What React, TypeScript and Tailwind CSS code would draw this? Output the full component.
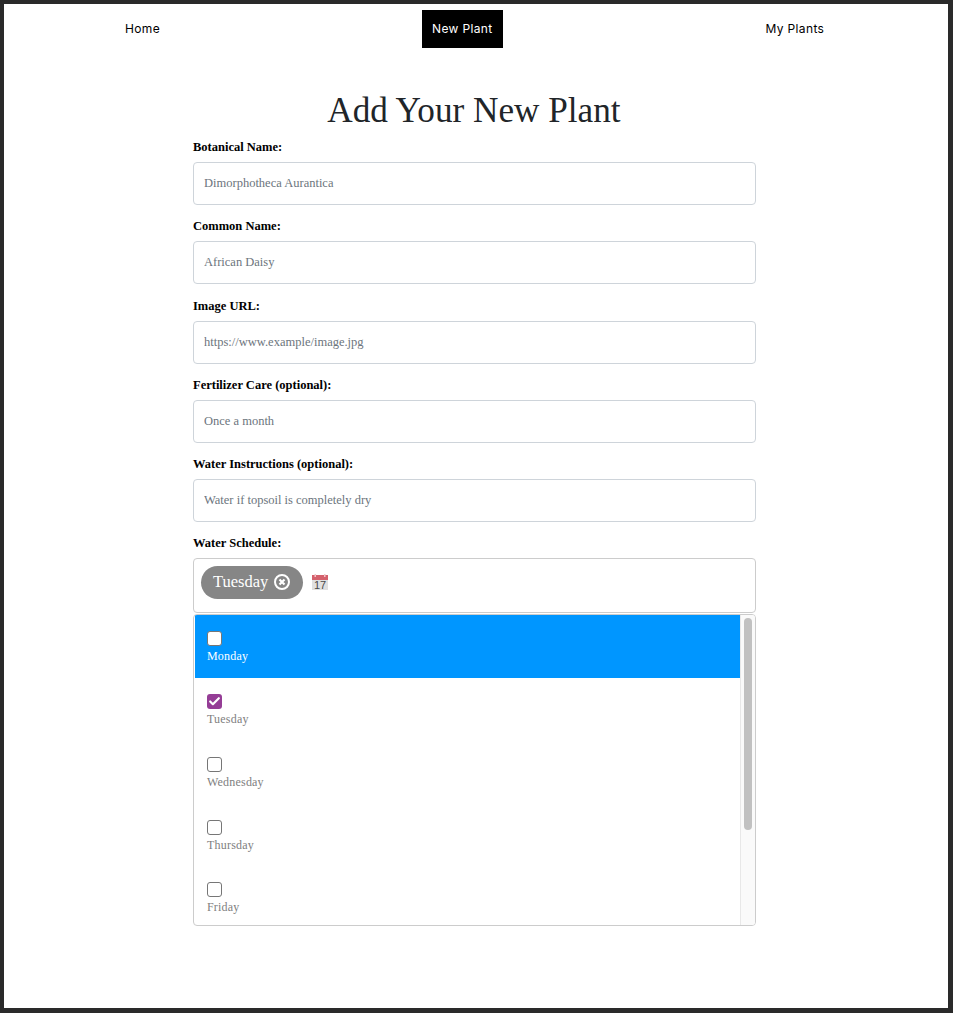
import { Check } from "lucide-react"

const serif = "font-['Liberation_Serif',serif]"

const fields = [
  { label: "Botanical Name:", placeholder: "Dimorphotheca Aurantica" },
  { label: "Common Name:", placeholder: "African Daisy" },
  { label: "Image URL:", placeholder: "https://www.example/image.jpg" },
  { label: "Fertilizer Care (optional):", placeholder: "Once a month" },
  { label: "Water Instructions (optional):", placeholder: "Water if topsoil is completely dry" },
]

const days = ["Monday", "Tuesday", "Wednesday", "Thursday", "Friday"]

function CalendarIcon() {
  return (
    <svg width="16" height="16" viewBox="0 0 16 16" className="ml-[9px] mt-[8px] shrink-0">
      <rect x="0" y="6" width="16" height="10" fill="#e0e0e0" />
      <rect x="0" y="1" width="16" height="5" fill="#d4606c" />
      <rect x="2.5" y="0" width="1.5" height="3" fill="#f0c4c8" />
      <rect x="12" y="0" width="1.5" height="3" fill="#f0c4c8" />
      <text x="8" y="15" textAnchor="middle" fontSize="11" fill="#4a4a4a" fontFamily="Liberation Sans, sans-serif">
        17
      </text>
    </svg>
  )
}

function CloseIcon() {
  return (
    <svg width="16" height="16" viewBox="0 0 16 16" className="ml-1.5 shrink-0" fill="none" stroke="white">
      <circle cx="8" cy="8" r="7" strokeWidth="2" />
      <path d="M5.5 5.5l5 5M10.5 5.5l-5 5" strokeWidth="2.2" />
    </svg>
  )
}

function DayRow({ day }: { day: string }) {
  const active = day === "Monday"
  const checked = day === "Tuesday"
  return (
    <div className={`h-[62.75px] shrink-0 pl-3 pt-[16px] text-xs leading-[14px] ${active ? "bg-[#0096ff] text-white" : "text-[#808080]"}`}>
      {checked ? (
        <span className="flex h-[15px] w-[15px] items-center justify-center rounded-[3px] bg-[#953d96]">
          <Check size={13} strokeWidth={4} color="white" />
        </span>
      ) : (
        <span className="block h-[15px] w-[15px] rounded-[3px] border-[1.5px] border-[#767676] bg-white" />
      )}
      <div className="mt-[3px] tracking-[0.2px]">{day}</div>
    </div>
  )
}

export default function App() {
  return (
    <div className={`flex h-[1013px] flex-col border-t-4 border-r-[5px] border-b-[5px] border-l-4 border-[#2a2a2a] bg-white ${serif}`}>
      <nav className="flex h-[44px] items-start pt-1.5 pl-[121px] font-['Inter',sans-serif] text-xs tracking-[0.35px]">
        <a className="flex h-[38px] items-center text-black">Home</a>
        <a className="ml-[262px] flex h-[38px] items-center bg-black px-[10px] text-white">New Plant</a>
        <a className="ml-[263px] flex h-[38px] items-center text-black">My Plants</a>
      </nav>

      <h1 className="mt-[41px] h-[44px] pr-1 text-center text-[35.2px] leading-[44px] text-[#212529]">Add Your New Plant</h1>

      <form className="ml-[189px] mt-[5px] w-[563px]">
        {fields.map((f) => (
          <div key={f.label} className="h-[79.3px]">
            <label className="block h-[24px] text-[12.5px] leading-[18px] font-bold text-black">{f.label}</label>
            <input
              readOnly
              placeholder={f.placeholder}
              className="h-[43px] w-full rounded-[4px] border border-[#ced4da] px-[10px] text-[12.5px] text-[#495057] outline-none placeholder:text-[#6c757d]"
            />
          </div>
        ))}

        <label className="block h-[24px] text-[12.5px] leading-[18px] font-bold text-black">Water Schedule:</label>
        <div className="flex h-[55px] items-start rounded-[4px] border border-[#cccccc] pt-[7px] pl-[7px]">
          <span className="flex h-[33px] w-[102px] items-center rounded-[17px] bg-[#868686] pb-px pl-3 text-[16.5px] text-white">
            Tuesday
            <CloseIcon />
          </span>
          <CalendarIcon />
        </div>

        <div className="mt-px flex h-[312px] overflow-hidden rounded-[4px] border border-[#cccccc] pl-px">
          <div className="flex min-w-0 flex-1 flex-col overflow-hidden">
            {days.map((d) => (
              <DayRow key={d} day={d} />
            ))}
          </div>
          <div className="w-[15px] shrink-0 border-l border-[#e8e8e8] bg-[#fafafa] pt-[3px] pl-[3px]">
            <div className="h-[212px] w-2 rounded-[4px] bg-[#c1c1c1]" />
          </div>
        </div>
      </form>
    </div>
  )
}
